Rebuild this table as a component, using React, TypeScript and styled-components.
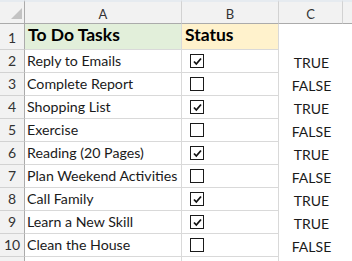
import { createGlobalStyle, styled } from "styled-components";

const tasks = [
  { name: "Reply to Emails", done: true },
  { name: "Complete Report", done: false },
  { name: "Shopping List", done: true },
  { name: "Exercise", done: false },
  { name: "Reading (20 Pages)", done: true },
  { name: "Plan Weekend Activities", done: false },
  { name: "Call Family", done: true },
  { name: "Learn a New Skill", done: true },
  { name: "Clean the House", done: false },
];

function CheckBox({ checked }: { checked: boolean }) {
  return (
    <Box>
      {checked && (
        <svg width="11" height="11" viewBox="0 0 11 11">
          <path d="M2 5.5 L4.3 8 L9 2.5" fill="none" stroke="#111" strokeWidth="1.8" />
        </svg>
      )}
    </Box>
  );
}

export default function App() {
  return (
    <>
      <GlobalStyle />
      <Sheet>
        <Corner>
          <Triangle />
        </Corner>
        <ColHead>A</ColHead>
        <ColHead>B</ColHead>
        <ColHead>C</ColHead>
        <ColHead $last />

        <RowHead>1</RowHead>
        <TitleCell $bg="#e2efda">To Do Tasks</TitleCell>
        <TitleCell $bg="#fff2cc">Status</TitleCell>
        <Blank />
        <Blank />

        {tasks.map((task, i) => (
          <Row key={task.name}>
            <RowHead>{i + 2}</RowHead>
            <TaskCell>{task.name}</TaskCell>
            <StatusCell>
              <CheckBox checked={task.done} />
            </StatusCell>
            <ValueCell>{task.done ? "TRUE" : "FALSE"}</ValueCell>
            <Blank />
          </Row>
        ))}

        <RowHead />
        <TaskCell />
        <StatusCell />
        <Blank />
        <Blank />
      </Sheet>
    </>
  );
}

const GlobalStyle = createGlobalStyle`
  body {
    margin: 0;
    background: #fff;
    font-family: Lato, "Liberation Sans", sans-serif;
    overflow: hidden;
  }
`;

const Sheet = styled.div`
  display: grid;
  grid-template-columns: 25px 157px 97px 64px 9px;
  grid-template-rows: 24px 26px repeat(10, 23px);
  height: 261px;
  overflow: hidden;
  color: #1a1a1a;
`;

const Row = styled.div`
  display: contents;
`;

const Corner = styled.div`
  display: flex;
  align-items: flex-end;
  justify-content: flex-end;
  padding: 0 2px 4px 0;
  background: #f2f2f2;
  border-top: 2px solid #e6ebf0;
  border-right: 1px solid #ababab;
  border-bottom: 1px solid #ababab;
`;

const Triangle = styled.span`
  width: 0;
  height: 0;
  border-left: 11px solid transparent;
  border-bottom: 11px solid #c3c3c3;
`;

const ColHead = styled.div<{ $last?: boolean }>`
  display: flex;
  align-items: center;
  justify-content: center;
  padding-top: 2px;
  background: #f2f2f2;
  border-top: 2px solid #e6ebf0;
  border-right: ${(p) => (p.$last ? "none" : "1px solid #d2d2d2")};
  border-bottom: 1px solid #ababab;
  font-size: 13px;
  color: #333;
`;

const RowHead = styled.div`
  display: flex;
  align-items: flex-end;
  justify-content: center;
  padding-bottom: 3px;
  background: #f2f2f2;
  border-right: 1px solid #ababab;
  border-bottom: 1px solid #d2d2d2;
  font-size: 14px;
  color: #333;
`;

const TitleCell = styled.div<{ $bg: string }>`
  display: flex;
  align-items: flex-end;
  padding: 0 0 4px 3px;
  background: ${(p) => p.$bg};
  border-right: 1px solid #d9d9d9;
  border-bottom: 1px solid #d9d9d9;
  font-size: 17.5px;
  font-weight: 700;
  color: #000;
`;

const TaskCell = styled.div`
  display: flex;
  align-items: flex-end;
  padding: 0 0 3px 2px;
  border-right: 1px solid #d9d9d9;
  border-bottom: 1px solid #d9d9d9;
  font-size: 14.2px;
  white-space: nowrap;
  overflow: hidden;
`;

const StatusCell = styled.div`
  display: flex;
  align-items: center;
  padding-left: 8px;
  border-right: 1px solid #d9d9d9;
  border-bottom: 1px solid #d9d9d9;
`;

const Box = styled.div`
  box-sizing: border-box;
  width: 14px;
  height: 14px;
  border: 1px solid #1a1a1a;
  background: #fff;
  display: flex;
  align-items: center;
  justify-content: center;
`;

const ValueCell = styled.div`
  display: flex;
  align-items: flex-end;
  justify-content: center;
  padding: 0 0 2px 1px;
  font-size: 14px;
  color: #1a1a1a;
`;

const Blank = styled.div``;
